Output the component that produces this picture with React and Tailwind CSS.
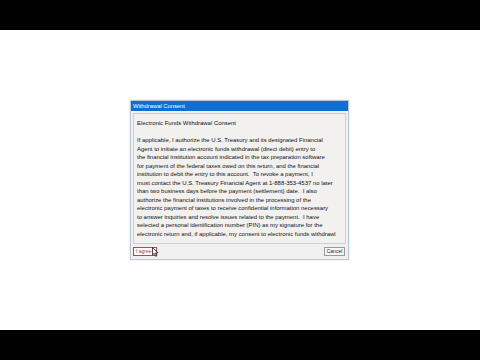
import React from "react";

const lines = [
  "If applicable, I authorize the U.S. Treasury and its designated Financial",
  "Agent to initiate an electronic funds withdrawal (direct debit) entry to",
  "the financial institution account indicated in the tax preparation software",
  "for payment of the federal taxes owed on this return, and the financial",
  "institution to debit the entry to this account.  To revoke a payment, I",
  "must contact the U.S. Treasury Financial Agent at 1-888-353-4537 no later",
  "than two business days before the payment (settlement) date.  I also",
  "authorize the financial institutions involved in the processing of the",
  "electronic payment of taxes to receive confidential information necessary",
  "to answer inquiries and resolve issues related to the payment.  I have",
  "selected a personal identification number (PIN) as my signature for the",
  "electronic return and, if applicable, my consent to electronic funds withdrawl",
];

const App = () => {
  return (
    <div className="w-[480px] h-[360px] flex flex-col bg-white font-['Liberation_Sans',Arial,sans-serif]">
      <div className="h-[30px] bg-black" />
      <div className="h-[300px] bg-white pt-[70px] pl-[130px]">
        {/* Dialog */}
        <div className="w-[219px] h-[160px] border border-[#b9c7d8] bg-[#f0f0f0] flex flex-col shadow-[0_0_2px_rgba(0,0,0,0.15)]">
          <div className="h-[10px] bg-[#0b6fd6] text-white text-[5.8px] leading-[10px] pl-[2px] whitespace-nowrap">
            Withdrawal Consent
          </div>
          <div className="flex-1 flex flex-col px-[2px] pt-[2px] pb-[3px]">
            <div className="h-[131px] border border-[#d0d0d0] bg-[#f2f1ef] pl-[3px] pr-[2px] pt-[5px] overflow-hidden">
              <div className="text-[5.95px] leading-[8.5px] text-[#111] whitespace-nowrap">
                <div>Electronic Funds Withdrawal Consent</div>
                <div>&nbsp;</div>
                {lines.map((l, i) => (
                  <div key={i} className="whitespace-pre">{l}</div>
                ))}
              </div>
            </div>
            <div className="h-[9px] flex justify-between items-center mt-[3px] text-[0px] leading-none">
              <div className="relative flex">
                <button className="w-[24px] h-[9px] border border-[#b04a5a] bg-[#fbfbfb] text-[#c23a4e] text-[5px] leading-[7px] pl-[2px] text-left">
                  I agree
                </button>
                <svg className="absolute left-[19px] top-[0px]" width="7" height="10" viewBox="0 0 7 10">
                  <path d="M0.5 0.5 L0.5 8 L2.3 6.3 L3.6 9.3 L4.8 8.8 L3.6 5.9 L6 5.9 Z" fill="#fff" stroke="#000" strokeWidth="0.7" />
                </svg>
              </div>
              <button className="w-[21px] h-[9px] border border-[#9a9a9a] bg-[#f6f6f6] text-[#222] text-[5px] leading-[7px] mr-[1px]">
                Cancel
              </button>
            </div>
          </div>
        </div>
      </div>
      <div className="h-[30px] bg-black" />
    </div>
  );
};

export default App;
